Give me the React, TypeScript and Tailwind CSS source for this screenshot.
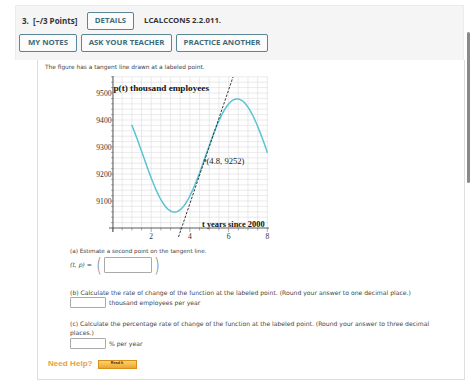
import React from "react";

const X0 = 111.5;
const SX = 19.35;
const Y0 = 228;
const SY = 0.27;
const px = (t: number) => X0 + t * SX;
const py = (p: number) => Y0 - (p - 9000) * SY;
const f = (t: number) => 9268.5 - 209.5 * Math.cos((2 * Math.PI * (t - 3.2)) / 6.48);

function Chart() {
  const vLines: number[] = [];
  for (let k = 0; k <= 16; k++) vLines.push(px(k * 0.5));
  const hLines: number[] = [];
  for (let p = 9020; p <= 9560; p += 20) hLines.push(py(p));
  const pts: string[] = [];
  for (let t = 1; t <= 8.0001; t += 0.05) pts.push(`${px(t).toFixed(2)},${py(f(t)).toFixed(2)}`);
  const serif = "'Liberation Serif', 'DejaVu Serif', serif";
  return (
    <svg width="236" height="168" viewBox="44 74 236 168" className="block">
      {vLines.map((x, i) => (
        <line key={"v" + i} x1={x} y1={77} x2={x} y2={228} stroke="#dcdcdc" strokeWidth={0.6} />
      ))}
      {hLines.map((y, i) => (
        <line key={"h" + i} x1={112} y1={y} x2={267} y2={y} stroke="#dcdcdc" strokeWidth={0.6} />
      ))}
      <line x1={112} y1={76} x2={112} y2={232} stroke="#333" strokeWidth={0.8} />
      <line x1={108} y1={228} x2={268} y2={228} stroke="#333" strokeWidth={0.8} />
      {hLines.map((y, i) => (
        <line key={"yt" + i} x1={110} y1={y} x2={112} y2={y} stroke="#555" strokeWidth={0.5} />
      ))}
      {vLines.map((x, i) => (
        <line key={"xt" + i} x1={x} y1={228} x2={x} y2={i % 4 === 0 ? 232 : 230.5} stroke="#555" strokeWidth={0.5} />
      ))}
      {[9500, 9400, 9300, 9200, 9100].map((p) => (
        <text key={p} x={110.5} y={py(p) + 2.5} fontSize={7.6} textAnchor="end" fill="#333" fontFamily={serif}>
          {p}
        </text>
      ))}
      {[2, 4, 6, 8].map((t) => (
        <text key={t} x={px(t)} y={238.5} fontSize={7.6} textAnchor="middle" fill="#333" fontFamily={serif}>
          {t}
        </text>
      ))}
      <polyline points={pts.join(" ")} fill="none" stroke="#5cc3d3" strokeWidth={1.5} strokeLinecap="round" />
      <line x1={177.5} y1={237} x2={232} y2={77} stroke="#222" strokeWidth={0.9} strokeDasharray="2.5 1.5" />
      <circle cx={204} cy={160.5} r={1.4} fill="#2a6f7a" />
      <text x={205.5} y={164} fontSize={8.6} fill="#222" fontFamily={serif}>
        (4.8, 9252)
      </text>
      <text x={112.5} y={91} fontSize={9.2} fontWeight="bold" fill="#111" fontFamily={serif}>
        p(t) thousand employees
      </text>
      <text x={201} y={226.5} fontSize={8.4} fontWeight="bold" fill="#111" fontFamily={serif}>
        t years since 2000
      </text>
    </svg>
  );
}

const btn =
  "flex items-center justify-center h-[18px] border-[1.5px] border-[#5a8594] rounded-[2px] bg-[#fbfbfb] text-[#3f6b7a] font-bold text-[7.8px] font-['Open_Sans',sans-serif]";

export default function App() {
  const font = "font-['DejaVu_Sans',Verdana,sans-serif] text-[#444]";
  return (
    <div className="relative w-[474px] h-[383px] bg-white overflow-hidden">
      <div className="ml-[15px] mt-[5px] w-[449px] h-[55px] bg-[#f5f5f5] border border-[#ececec] border-b-0">
        <div className="flex items-center pt-[6px] pl-[6px] h-[24px]">
          <span className="font-['Open_Sans',sans-serif] font-bold text-[8px] text-[#333] w-[65px] whitespace-nowrap">
            3.&nbsp;&nbsp;[–/3 Points]
          </span>
          <div className={btn + " w-[47px]"}>DETAILS</div>
          <span className="ml-[10px] font-['Open_Sans',sans-serif] font-bold text-[7.8px] text-[#333]">
            LCALCCON5 2.2.011.
          </span>
        </div>
        <div className="flex items-center gap-[4px] mt-[4px] pl-[3px]">
          <div className={btn + " w-[58px]"}>MY NOTES</div>
          <div className={btn + " w-[91px]"}>ASK YOUR TEACHER</div>
          <div className={btn + " w-[92px]"}>PRACTICE ANOTHER</div>
        </div>
      </div>
      <div className="ml-[37px] w-[428px] h-[320px] border-x border-b border-[#dedede] bg-white">
        <div className={font + " text-[5.85px] pl-[7px] pt-[3px] leading-[8px]"}>
          The figure has a tangent line drawn at a labeled point.
        </div>
        <div className="pl-[7px] mt-[3px]">
          <Chart />
        </div>
        <div className={font + " text-[6.1px] pl-[32px]"}>
          <div className="mt-[5px] leading-[8px] text-[5.7px]">(a) Estimate a second point on the tangent line.</div>
          <div className="flex items-center h-[16px] mt-[2px]">
            <span className="italic w-[24px] whitespace-nowrap">(t, p) =</span>
            <span className="ml-[1px] text-[20px] leading-[16px] text-[#666] font-['DejaVu_Sans',sans-serif] font-light scale-x-[0.7]">(</span>
            <div className="ml-[1px] w-[48px] h-[16px] border border-[#aaa] rounded-[1px] bg-white" />
            <span className="ml-[1px] text-[20px] leading-[16px] text-[#666] font-['DejaVu_Sans',sans-serif] font-light scale-x-[0.7]">)</span>
          </div>
          <div className="mt-[16px] leading-[8px] whitespace-nowrap">
            (b) Calculate the rate of change of the function at the labeled point. (Round your answer to one decimal place.)
          </div>
          <div className="flex items-center h-[11px]">
            <div className="w-[36px] h-[11px] border border-[#aaa] rounded-[1px] bg-white" />
            <span className="ml-[3px]">thousand employees per year</span>
          </div>
          <div className="mt-[11px] leading-[9px] w-[378px]">
            (c) Calculate the percentage rate of change of the function at the labeled point. (Round your answer to three decimal places.)
          </div>
          <div className="flex items-center h-[11px] mt-[1px]">
            <div className="w-[36px] h-[11px] border border-[#aaa] rounded-[1px] bg-white" />
            <span className="ml-[3px]">% per year</span>
          </div>
        </div>
        <div className="flex items-center pl-[10px] mt-[9px]">
          <span className="font-['Liberation_Sans',Arial,sans-serif] font-bold text-[8.1px] text-[#e9a13b]">Need Help?</span>
          <div className="ml-[5px] w-[39px] h-[9px] flex items-center justify-center bg-gradient-to-b from-[#fbd36b] to-[#eea42d] border border-[#d98f1d] font-['Liberation_Sans',Arial,sans-serif] font-bold text-[3.8px] text-[#3a2a10]">
            Read It
          </div>
        </div>
      </div>
      <div className="absolute left-[467px] top-[32px] w-[3px] h-[151px] rounded-[2px] bg-[#8a8a8a]" />
    </div>
  );
}
